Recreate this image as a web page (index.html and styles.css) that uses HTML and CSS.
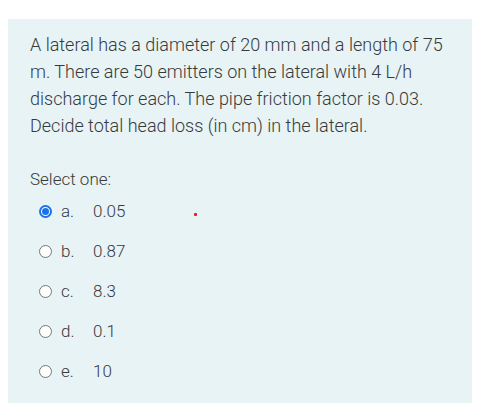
FILE: index.html
```html
<!DOCTYPE html>
<html>
<head>
<meta charset="utf-8">
<link rel="stylesheet" href="styles.css">
</head>
<body>
<div class="que">
  <div class="qtext">A lateral has a diameter of 20 mm and a length of 75 m. There are 50 emitters on the lateral with 4 L/h discharge for each. The pipe friction factor is 0.03. Decide total head loss (in cm) in the lateral.</div>
  <div class="prompt">Select one:</div>
  <div class="answers">
    <div class="opt"><span class="radio checked"></span><span class="letter">a.</span><span class="val">0.05</span><span class="dot"></span></div>
    <div class="opt"><span class="radio"></span><span class="letter">b.</span><span class="val">0.87</span></div>
    <div class="opt"><span class="radio"></span><span class="letter">c.</span><span class="val">8.3</span></div>
    <div class="opt"><span class="radio"></span><span class="letter">d.</span><span class="val">0.1</span></div>
    <div class="opt"><span class="radio"></span><span class="letter">e.</span><span class="val">10</span></div>
  </div>
</div>
</body>
</html>
```
FILE: styles.css
```css
html, body { margin: 0; padding: 0; background: #fff; }
body { padding: 19px 19px 0 8px; font-family: Roboto, "Noto Sans", sans-serif; color: #373a3c; font-weight: 300; }
.que { background: #e7f3f5; padding: 12px 22px 0 22px; min-height: 384px; box-sizing: border-box; }
.qtext { font-size: 18px; line-height: 27px; }
.prompt { font-size: 17px; line-height: 24px; margin-top: 28px; }
.answers { display: flex; flex-direction: column; }
.opt { display: flex; align-items: center; height: 40px; font-size: 17px; padding-left: 9px; position: relative; }
.radio { width: 11px; height: 11px; border: 1px solid #767676; border-radius: 50%; background: #fff; box-sizing: content-box; }
.radio.checked { border: 2px solid #1a73e8; width: 9px; height: 9px; display: flex; align-items: center; justify-content: center; }
.radio.checked::after { content: ""; width: 7px; height: 7px; border-radius: 50%; background: #1a73e8; }
.letter { margin-left: 9px; width: 32px; }
.dot { position: absolute; left: 164px; top: 22px; width: 3px; height: 3px; background: #e02020; border-radius: 1px; }
```
